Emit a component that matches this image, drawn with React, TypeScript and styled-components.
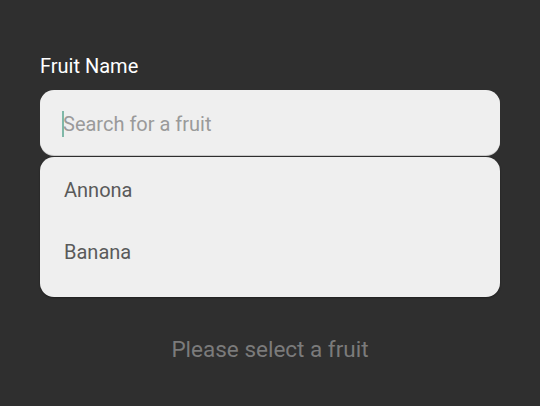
import React from "react"
import styled, { createGlobalStyle } from "styled-components"

const GlobalStyle = createGlobalStyle`
  html, body {
    margin: 0;
    padding: 0;
    background: #2f2f2f;
  }
  body {
    font-family: Roboto, "Noto Sans", sans-serif;
  }
`

const fruits = ["Annona", "Banana"]

export default function App() {
  return (
    <>
      <GlobalStyle />
      <Page>
        <Field>
          <Label>Fruit Name</Label>
          <SearchBox>
            <Caret />
            <Placeholder>Search for a fruit</Placeholder>
          </SearchBox>
          <ListBox>
            {fruits.map((fruit) => (
              <Option key={fruit}>{fruit}</Option>
            ))}
          </ListBox>
        </Field>
        <Hint>Please select a fruit</Hint>
      </Page>
    </>
  )
}

const Page = styled.div`
  width: 540px;
  height: 406px;
  box-sizing: border-box;
  padding: 53px 40px 0;
  display: flex;
  flex-direction: column;
`

const Field = styled.div`
  display: flex;
  flex-direction: column;
`

const Label = styled.div`
  color: #ffffff;
  font-size: 20px;
  line-height: 26px;
  margin-bottom: 11px;
`

const SearchBox = styled.div`
  height: 65px;
  background: #efefef;
  border-radius: 14px;
  box-shadow: 0 1px 0 #c9c9c9;
  display: flex;
  align-items: center;
  padding-left: 22px;
  padding-top: 3px;
  box-sizing: border-box;
`

const Caret = styled.span`
  width: 2px;
  height: 26px;
  background: #7fb8a8;
  margin-right: -1px;
`

const Placeholder = styled.span`
  color: #9a9a9a;
  font-size: 20px;
`

const ListBox = styled.div`
  margin-top: 2px;
  height: 140px;
  box-sizing: border-box;
  background: #efefef;
  border-radius: 14px;
  box-shadow: 0 1px 2px rgba(0, 0, 0, 0.35);
  display: flex;
  flex-direction: column;
  padding-top: 2px;
`

const Option = styled.div`
  height: 62px;
  display: flex;
  align-items: center;
  padding-left: 24px;
  color: #5a5a5a;
  font-size: 20px;
`

const Hint = styled.div`
  margin-top: 39px;
  text-align: center;
  color: #7b7b7b;
  font-size: 22.5px;
`
